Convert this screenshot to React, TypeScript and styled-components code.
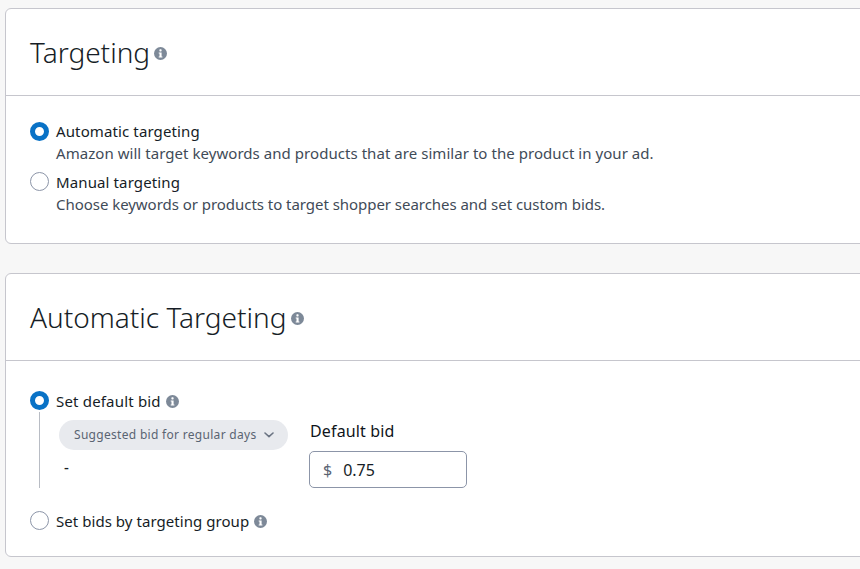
import React from "react";
import styled, { createGlobalStyle } from "styled-components";

const Global = createGlobalStyle`
  html, body { margin: 0; padding: 0; background: #f7f7f7; }
  body { font-family: "Noto Sans", "Open Sans", sans-serif; color: #161d26; overflow: hidden; }
`;

const Page = styled.div`
  width: 860px;
  height: 569px;
  padding: 8px 0 0 5px;
  box-sizing: border-box;
  display: flex;
  flex-direction: column;
  gap: 29px;
  overflow: hidden;
`;

const Card = styled.section`
  width: 880px;
  flex: none;
  background: #fff;
  border: 1px solid #c6c6cd;
  border-radius: 6px;
  box-sizing: border-box;
`;

const CardHeader = styled.header`
  height: 87px;
  box-sizing: border-box;
  border-bottom: 1px solid #c6c6cd;
  padding-left: 24px;
  display: flex;
  align-items: center;
  gap: 4px;
`;

const Title = styled.h2`
  margin: 0;
  font-size: 28px;
  line-height: 36px;
  font-weight: 300;
  color: #161d26;
`;

const TitleInfo = styled.span`
  display: flex;
  margin-top: 3px;
`;

const CardBody = styled.div<{ $h: number; $top: number }>`
  height: ${(p) => p.$h}px;
  box-sizing: border-box;
  padding: ${(p) => p.$top}px 0 0 24px;
  display: flex;
  flex-direction: column;
`;

const Option = styled.div<{ $h?: number }>`
  display: flex;
  gap: 7px;
  flex: none;
  ${(p) => (p.$h ? `height: ${p.$h}px;` : "")}
`;

const Radio = styled.span<{ $on?: boolean }>`
  width: 19px;
  height: 19px;
  flex: none;
  box-sizing: border-box;
  border-radius: 50%;
  background: #fff;
  border: ${(p) => (p.$on ? "5px solid #0972c6" : "1px solid #8c95a8")};
`;

const OptionText = styled.div<{ $shift?: number }>`
  display: flex;
  flex-direction: column;
  margin-top: ${(p) => p.$shift ?? 0}px;
`;

const Label = styled.div<{ $ls?: number }>`
  font-size: 15px;
  line-height: 20px;
  letter-spacing: ${(p) => p.$ls ?? 0.12}px;
  color: #161d26;
  display: flex;
  align-items: center;
  gap: 5px;
`;

const Desc = styled.div<{ $ls: number }>`
  font-size: 15px;
  line-height: 20px;
  letter-spacing: ${(p) => p.$ls}px;
  color: #3f4b58;
  margin-top: 2px;
`;

const BidArea = styled.div`
  display: flex;
  flex: none;
  margin-left: 9px;
  height: 99px;
  margin-top: 1px;
`;

const Rail = styled.div`
  width: 1px;
  height: 76px;
  background: #b8bcc4;
  flex: none;
`;

const SuggestCol = styled.div`
  width: 269px;
  padding: 8px 0 0 19px;
  box-sizing: border-box;
  flex: none;
`;

const Pill = styled.button`
  width: 229px;
  height: 30px;
  border: 0;
  border-radius: 15px;
  background: #e8eaee;
  color: #5a6472;
  font: 12px/16px "Noto Sans", sans-serif;
  letter-spacing: 0.3px;
  display: flex;
  align-items: center;
  padding: 0 0 0 15px;
  gap: 7px;
  white-space: nowrap;
`;

const Dash = styled.div`
  font-size: 15px;
  line-height: 20px;
  font-weight: 500;
  margin: 7px 0 0 5px;
  color: #161d26;
`;

const FieldCol = styled.div`
  display: flex;
  flex-direction: column;
`;

const FieldLabel = styled.div`
  font-size: 16px;
  line-height: 20px;
  letter-spacing: 0.15px;
  margin: 9px 0 0 1px;
  color: #0f141a;
`;

const Field = styled.div`
  width: 158px;
  height: 37px;
  flex: none;
  box-sizing: border-box;
  margin-top: 10px;
  border: 1px solid #8c95a8;
  border-radius: 5px;
  display: flex;
  align-items: center;
  padding-left: 13px;
  gap: 11px;
  font-size: 16px;
`;

const Currency = styled.span`
  color: #5a6472;
`;

const Value = styled.span`
  color: #161d26;
`;

const InfoSvg = styled.svg`
  width: 13px;
  height: 13px;
  flex: none;
`;

const Info = () => (
  <InfoSvg viewBox="0 0 13 13" aria-hidden="true">
    <circle cx="6.5" cy="6.5" r="6.5" fill="#7d8998" />
    <rect x="5.4" y="2.3" width="2.2" height="2.1" rx="0.6" fill="#fff" />
    <path d="M4.7 5.4h2.9v4.1h.8v1H4.7v-1h.8V6.4h-.8z" fill="#fff" />
  </InfoSvg>
);

const Chevron = () => (
  <svg width="10" height="6" viewBox="0 0 10 6" aria-hidden="true">
    <path d="M1 1l4 3.6L9 1" fill="none" stroke="#6b7483" strokeWidth="1.6" strokeLinecap="round" strokeLinejoin="round" />
  </svg>
);

export default function App() {
  return (
    <Page>
      <Global />
      <Card>
        <CardHeader>
          <Title>Targeting</Title>
          <TitleInfo>
            <Info />
          </TitleInfo>
        </CardHeader>
        <CardBody $h={147} $top={26}>
          <Option $h={50}>
            <Radio $on />
            <OptionText $shift={-1}>
              <Label>Automatic targeting</Label>
              <Desc $ls={0.05}>Amazon will target keywords and products that are similar to the product in your ad.</Desc>
            </OptionText>
          </Option>
          <Option>
            <Radio />
            <OptionText>
              <Label>Manual targeting</Label>
              <Desc $ls={-0.04}>Choose keywords or products to target shopper searches and set custom bids.</Desc>
            </OptionText>
          </Option>
        </CardBody>
      </Card>
      <Card>
        <CardHeader>
          <Title>Automatic Targeting</Title>
          <TitleInfo>
            <Info />
          </TitleInfo>
        </CardHeader>
        <CardBody $h={195} $top={30}>
          <Option>
            <Radio $on />
            <Label $ls={0.18}>
              Set default bid <Info />
            </Label>
          </Option>
          <BidArea>
            <Rail />
            <SuggestCol>
              <Pill>
                Suggested bid for regular days <Chevron />
              </Pill>
              <Dash>-</Dash>
            </SuggestCol>
            <FieldCol>
              <FieldLabel>Default bid</FieldLabel>
              <Field>
                <Currency>$</Currency>
                <Value>0.75</Value>
              </Field>
            </FieldCol>
          </BidArea>
          <Option $h={20}>
            <Radio />
            <Label $ls={0.05}>
              Set bids by targeting group <Info />
            </Label>
          </Option>
        </CardBody>
      </Card>
    </Page>
  );
}
